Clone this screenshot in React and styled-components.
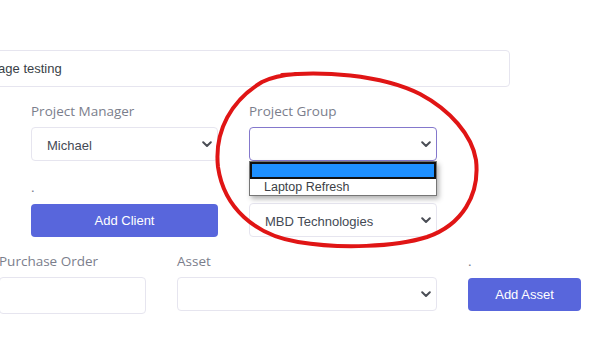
import React from 'react'
import styled, {createGlobalStyle} from 'styled-components'

const GlobalStyle = createGlobalStyle`
  html, body {
    margin: 0;
    padding: 0;
    background: #fff;
    overflow: hidden;
  }
  body {
    font-family: "Liberation Sans", Arial, sans-serif;
  }
`

function Chevron() {
    return (
        <svg width="10" height="7" viewBox="0 0 10 7">
            <path d="M1.2 1.3 L5 5 L8.8 1.3" fill="none" stroke="#4a4d55" strokeWidth="2" strokeLinecap="round" strokeLinejoin="round" />
        </svg>
    )
}

function Select({value, focused, children}) {
    return (
        <SelectBox focused={focused}>
            <span>{value}</span>
            <Chevron />
            {children}
        </SelectBox>
    )
}

function App() {
    return (
        <Page>
            <GlobalStyle />
            <Form>
                <TextInput readOnly value="Laptop Refresh - Backup storage testing" />

                <Row cols="187px 187px 188px" top={14}>
                    <Field>
                        <Label />
                        <TextInput short readOnly value="" />
                    </Field>
                    <Field>
                        <Label>Project Manager</Label>
                        <Select value="Michael" />
                    </Field>
                    <Field>
                        <Label>Project Group</Label>
                        <Select value="" focused>
                            <Dropdown>
                                <Option active />
                                <Option>Laptop Refresh</Option>
                            </Dropdown>
                        </Select>
                    </Field>
                </Row>

                <Row cols="187px 187px 188px" top={16}>
                    <Field>
                        <Label />
                        <TextInput short readOnly value="" />
                    </Field>
                    <Field>
                        <Label>.</Label>
                        <Button>Add Client</Button>
                    </Field>
                    <Field>
                        <Label />
                        <Select value="MBD Technologies" />
                    </Field>
                </Row>

                <Row cols="155px 147px 260px 113px" top={14}>
                    <Field>
                        <Label />
                        <TextInput readOnly value="" />
                    </Field>
                    <Field>
                        <Label>Purchase Order</Label>
                        <TextInput readOnly value="" />
                    </Field>
                    <Field>
                        <Label>Asset</Label>
                        <Select value="" />
                    </Field>
                    <Field>
                        <Label>.</Label>
                        <Button>Add Asset</Button>
                    </Field>
                </Row>
            </Form>

            <Annotation viewBox="0 0 603 353">
                <path
                    d="M282 75 C320 71, 380 74, 420 94 C450 110, 472 135, 476 160 C480 195, 462 225, 427 237 C395 247, 340 249, 298 242 C255 235, 224 208, 218 167 C214 130, 232 100, 262 82 C272 77, 282 75, 296 74"
                    fill="none"
                    stroke="#e01515"
                    strokeWidth="4"
                    strokeLinecap="round"
                />
            </Annotation>
        </Page>
    )
}

export default App

const Page = styled.div`
position: relative;
width: 603px;
height: 353px;
overflow: hidden;
`

const Form = styled.div`
display: flex;
flex-direction: column;
margin-left: -187px;
width: 697px;
padding-top: 50px;
`

const Row = styled.div`
display: grid;
grid-template-columns: ${props => props.cols};
column-gap: 31px;
margin-top: ${props => props.top}px;
`

const Field = styled.div`
display: flex;
flex-direction: column;
position: relative;
`

const Label = styled.div`
font-family: "Open Sans", sans-serif;
font-size: 13.5px;
line-height: 20px;
height: 20px;
color: #7b7e8c;
margin-bottom: 6px;
white-space: nowrap;
`

const TextInput = styled.input`
box-sizing: border-box;
width: 100%;
height: ${props => props.short ? '34px' : '37px'};
border: 1px solid #e6e5ef;
border-radius: 4px;
padding: 0 15px;
font-family: "Liberation Sans", Arial, sans-serif;
font-size: 13px;
color: #3a3f47;
background: #fff;
outline: none;
`

const SelectBox = styled.div`
position: relative;
box-sizing: border-box;
height: 34px;
display: flex;
align-items: center;
justify-content: space-between;
padding: 3px 5px 0 15px;
border: 1px solid ${props => props.focused ? '#8478cc' : '#e6e5ef'};
border-radius: 4px;
background: #fff;
font-size: 13px;
color: #444a55;
span{
    white-space: nowrap;
}
svg{
    margin-top: -2px;
}
`

const Dropdown = styled.div`
position: absolute;
top: 33px;
left: -1px;
right: -1px;
z-index: 3;
box-sizing: border-box;
background: #fff;
border: 1px solid #767676;
box-shadow: 2px 3px 5px rgba(0,0,0,.3);
`

const Option = styled.div`
box-sizing: border-box;
height: ${props => props.active ? '17px' : '16px'};
line-height: 16px;
padding-left: 14px;
font-size: 12.5px;
color: #3c3f46;
background: ${props => props.active ? '#1e90ff' : '#fff'};
border: ${props => props.active ? '2px solid #111' : 'none'};
`

const Button = styled.div`
box-sizing: border-box;
height: 33px;
margin-top: 1px;
display: flex;
align-items: center;
justify-content: center;
background: #5866dc;
color: #fff;
border-radius: 4px;
font-size: 13px;
`

const Annotation = styled.svg`
position: absolute;
top: 0;
left: 0;
width: 603px;
height: 353px;
z-index: 5;
pointer-events: none;
`
